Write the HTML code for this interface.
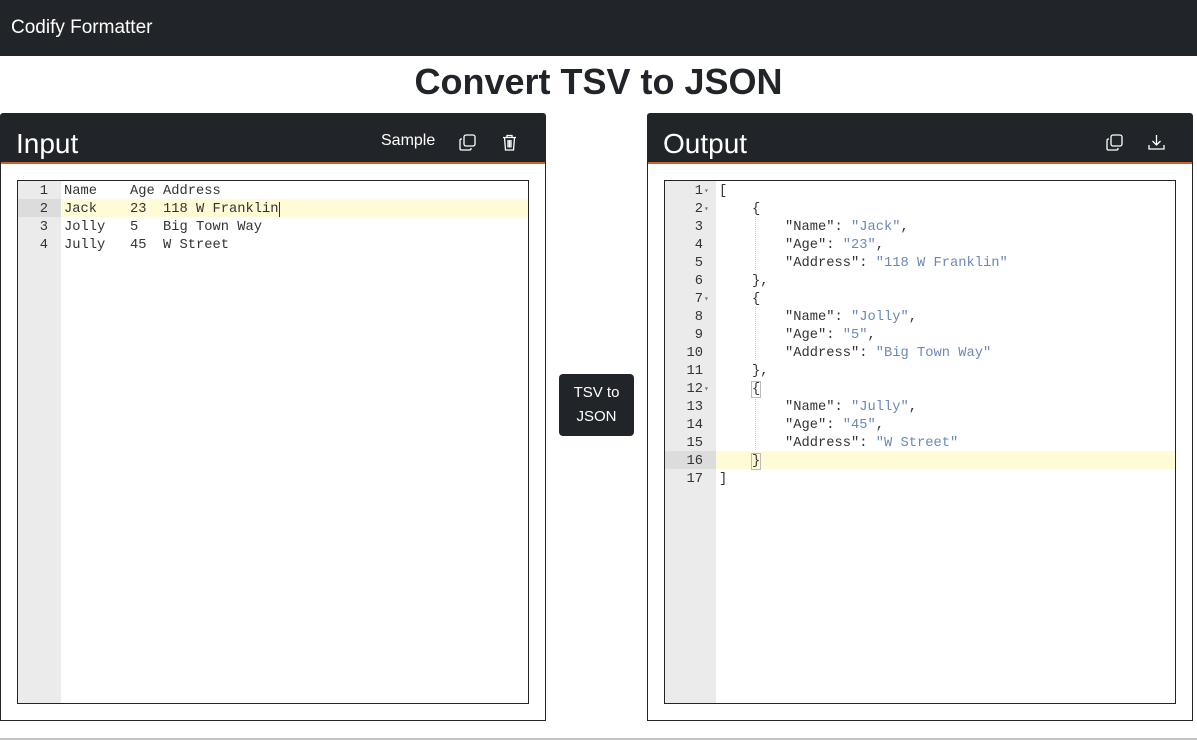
<!DOCTYPE html>
<html><head><meta charset="utf-8"><style>
*{box-sizing:border-box;margin:0;padding:0}
body{width:1197px;height:740px;overflow:hidden;background:#fff;font-family:"Liberation Sans",sans-serif;position:relative}
.nav{position:absolute;left:0;top:0;width:1197px;height:56px;background:#212529;color:#fff;font-size:19px;padding:17px 0 0 11px}
h1{position:absolute;top:61px;left:0;width:1197px;text-align:center;font-size:36px;font-weight:bold;color:#212529}
.panel{position:absolute;top:113px;height:608px;border:1px solid #212529;border-radius:3px 3px 0 0}
.hd{height:50px;background:#212529;border-bottom:2px solid #c9622a;color:#fff;position:relative}
.hd .t{position:absolute;left:15px;top:14px;font-size:28px}
.ed{position:absolute;top:66px;height:524px;border:1px solid #212529;background:#fff;overflow:hidden}
.gut{position:absolute;left:0;top:0;bottom:0;background:#ebebeb}
.ln{position:absolute;left:0;height:18px;width:100%;font-family:"Liberation Mono",monospace;font-size:13.75px;line-height:21px;color:#333;white-space:pre;overflow:visible}
.hl{background:#fefbd6}
.gn{position:absolute;height:18px;font-family:"Liberation Mono",monospace;font-size:13.75px;line-height:21px;color:#333;text-align:right;white-space:pre}
.s{color:#6a88b8}
.btn{position:absolute;left:559px;top:374px;width:75px;height:62px;background:#212529;border-radius:4px;color:#fff;font-size:15px;text-align:center;line-height:24px;padding-top:7px}
.ic{position:absolute;top:20px}
</style></head><body>
<div class="nav">Codify Formatter</div>
<h1>Convert TSV to JSON</h1>

<div class="panel" style="left:0;width:546px">
 <div class="hd"><span class="t">Input</span>
  <span style="position:absolute;left:380px;top:18px;font-size:16px">Sample</span>
  <svg class="ic" style="left:458px" width="17" height="17" viewBox="0 0 17 17" fill="none" stroke="#fff" stroke-width="1.3"><rect x="5" y="1" width="11" height="11" rx="2"/><path d="M3 5H2.5Q1 5 1 6.5V14.5Q1 16 2.5 16H10.5Q12 16 12 14.5V14"/></svg>
  <svg class="ic" style="left:501px" width="15" height="17" viewBox="0 0 15 17" fill="none" stroke="#fff" stroke-width="1.3"><path d="M1 3.5H14M5 3.5V1.5H10V3.5M2.5 3.5L3.5 16H11.5L12.5 3.5M6 6V13.5M9 6V13.5M7.5 6V13.5"/></svg>
 </div>
 <div class="ed" style="left:16px;width:512px">
  <div class="gut" style="width:43px"></div>
  <div class="ln hl" style="top:18px"></div>
  <div class="gn" style="top:0;left:0;width:30px">1</div>
  <div class="gn" style="top:18px;left:0;width:43px;background:#dcdcdc;padding-right:13px">2</div>
  <div class="gn" style="top:36px;left:0;width:30px">3</div>
  <div class="gn" style="top:54px;left:0;width:30px">4</div>
  <div class="ln" style="top:0;left:46px">Name    Age Address</div>
  <div class="ln" style="top:18px;left:46px">Jack    23  118 W Franklin<span style="border-left:1px solid #333;margin-left:0"></span></div>
  <div class="ln" style="top:36px;left:46px">Jolly   5   Big Town Way</div>
  <div class="ln" style="top:54px;left:46px">Jully   45  W Street</div>
 </div>
</div>

<div class="btn">TSV to<br>JSON</div>

<div class="panel" style="left:647px;width:546px">
 <div class="hd"><span class="t">Output</span>
  <svg class="ic" style="left:458px" width="17" height="17" viewBox="0 0 17 17" fill="none" stroke="#fff" stroke-width="1.3"><rect x="5" y="1" width="11" height="11" rx="2"/><path d="M3 5H2.5Q1 5 1 6.5V14.5Q1 16 2.5 16H10.5Q12 16 12 14.5V14"/></svg>
  <svg class="ic" style="left:500px" width="17" height="17" viewBox="0 0 17 17" fill="none" stroke="#fff" stroke-width="1.3"><path d="M8.5 1V11M4.5 7L8.5 11L12.5 7M1 11V15H16V11"/></svg>
 </div>
 <div class="ed" style="left:16px;width:512px">
  <div class="gut" style="width:51px"></div>
  <div class="ln hl" style="top:270px"></div>
  <div class="gn" style="top:270px;left:0;width:51px;background:#dcdcdc"></div>
  <svg style="position:absolute;left:90px;top:36px" width="1" height="54"><line x1="0.5" y1="0" x2="0.5" y2="54" stroke="#ccc" stroke-dasharray="1 1"/></svg>
  <svg style="position:absolute;left:90px;top:126px" width="1" height="54"><line x1="0.5" y1="0" x2="0.5" y2="54" stroke="#ccc" stroke-dasharray="1 1"/></svg>
  <svg style="position:absolute;left:90px;top:216px" width="1" height="54"><line x1="0.5" y1="0" x2="0.5" y2="54" stroke="#ccc" stroke-dasharray="1 1"/></svg>
  <div class="gn" style="top:0;left:0;width:38px">1</div>
  <div class="gn" style="top:18px;left:0;width:38px">2</div>
  <div class="gn" style="top:36px;left:0;width:38px">3</div>
  <div class="gn" style="top:54px;left:0;width:38px">4</div>
  <div class="gn" style="top:72px;left:0;width:38px">5</div>
  <div class="gn" style="top:90px;left:0;width:38px">6</div>
  <div class="gn" style="top:108px;left:0;width:38px">7</div>
  <div class="gn" style="top:126px;left:0;width:38px">8</div>
  <div class="gn" style="top:144px;left:0;width:38px">9</div>
  <div class="gn" style="top:162px;left:0;width:38px">10</div>
  <div class="gn" style="top:180px;left:0;width:38px">11</div>
  <div class="gn" style="top:198px;left:0;width:38px">12</div>
  <div class="gn" style="top:216px;left:0;width:38px">13</div>
  <div class="gn" style="top:234px;left:0;width:38px">14</div>
  <div class="gn" style="top:252px;left:0;width:38px">15</div>
  <div class="gn" style="top:270px;left:0;width:38px">16</div>
  <div class="gn" style="top:288px;left:0;width:38px">17</div>
  <div class="gn" style="top:0;left:39px;font-size:8px;color:#777">▾</div>
  <div class="gn" style="top:18px;left:39px;font-size:8px;color:#777">▾</div>
  <div class="gn" style="top:108px;left:39px;font-size:8px;color:#777">▾</div>
  <div class="gn" style="top:198px;left:39px;font-size:8px;color:#777">▾</div>
  <div class="ln" style="top:0;left:54px">[</div>
  <div class="ln" style="top:18px;left:54px">    {</div>
  <div class="ln" style="top:36px;left:54px">        "Name": <span class="s">"Jack"</span>,</div>
  <div class="ln" style="top:54px;left:54px">        "Age": <span class="s">"23"</span>,</div>
  <div class="ln" style="top:72px;left:54px">        "Address": <span class="s">"118 W Franklin"</span></div>
  <div class="ln" style="top:90px;left:54px">    },</div>
  <div class="ln" style="top:108px;left:54px">    {</div>
  <div class="ln" style="top:126px;left:54px">        "Name": <span class="s">"Jolly"</span>,</div>
  <div class="ln" style="top:144px;left:54px">        "Age": <span class="s">"5"</span>,</div>
  <div class="ln" style="top:162px;left:54px">        "Address": <span class="s">"Big Town Way"</span></div>
  <div class="ln" style="top:180px;left:54px">    },</div>
  <div class="ln" style="top:198px;left:54px">    <span style="outline:1px solid #bbb">{</span></div>
  <div class="ln" style="top:216px;left:54px">        "Name": <span class="s">"Jully"</span>,</div>
  <div class="ln" style="top:234px;left:54px">        "Age": <span class="s">"45"</span>,</div>
  <div class="ln" style="top:252px;left:54px">        "Address": <span class="s">"W Street"</span></div>
  <div class="ln" style="top:270px;left:54px">    <span style="outline:1px solid #bbb">}</span><span style="border-left:1px solid #333"></span></div>
  <div class="ln" style="top:288px;left:54px">]</div>
 </div>
</div>
<div style="position:absolute;left:0;top:738px;width:1197px;height:2px;background:#c4c4c4"></div>
</body></html>
